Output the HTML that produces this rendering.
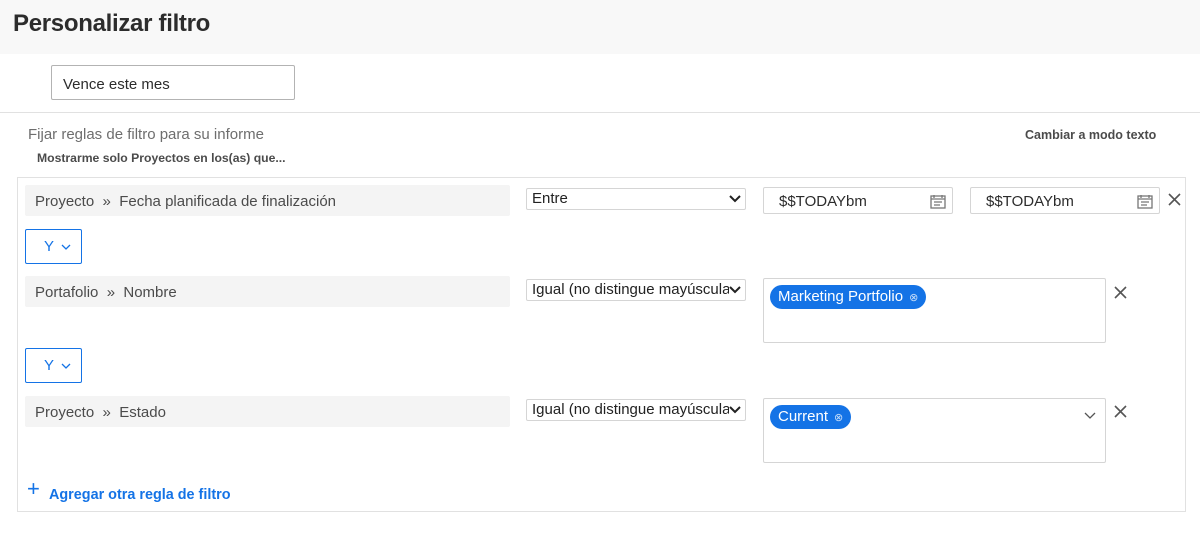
<!DOCTYPE html>
<html><head><meta charset="utf-8"><style>
*{box-sizing:border-box;margin:0;padding:0}
body{width:1200px;height:535px;background:#fff;font-family:"Liberation Sans",sans-serif;color:#2c2c2c;position:relative;overflow:hidden}
.abs{position:absolute}
.hdr{left:0;top:0;width:1200px;height:54px;background:#f8f8f8}
.hdr h1{position:absolute;left:13px;top:10px;font-size:24px;font-weight:bold;color:#2c2c2c;letter-spacing:-0.3px}
.name{left:51px;top:65px;width:244px;height:35px;border:1px solid #b3b3b3;border-radius:2px;font-size:15px;padding:10px 11px 0}
.sep{left:0;top:112px;width:1200px;height:1px;background:#e1e1e1}
.box{left:17px;top:177px;width:1169px;height:335px;border:1px solid #e1e1e1}
.field{height:31px;width:485px;left:25px;background:#f4f4f4;border-radius:2px;font-size:15px;color:#4b4b4b;padding:8px 10px 0}
.sel{left:526px;width:220px;height:22px;border:1px solid #d5d5d5;border-radius:2px;font-size:15px;padding:1px 5px;color:#222;overflow:hidden;white-space:nowrap}
.sel svg{position:absolute;right:4px;top:6px}
.date{width:190px;height:27px;border:1px solid #d5d5d5;border-radius:2px;font-size:15px;padding:5px 15px;top:187px}
.date svg{position:absolute;right:6px;top:6px}
.y{left:25px;width:57px;height:35px;border:1px solid #1473e6;border-radius:2px;color:#1473e6;font-size:15px;padding:8px 0 0 18px}
.y svg{position:absolute;left:35px;top:14px}
.tags{left:763px;width:343px;height:65px;border:1px solid #d5d5d5;border-radius:2px}
.tag{position:absolute;left:6px;top:6px;height:24px;background:#1473e6;color:#fff;border-radius:12px;font-size:15px;padding:3px 8px}
.tag span{font-size:11px;opacity:.75;margin-left:6px}
</style></head><body>
<div class="abs hdr"><h1>Personalizar filtro</h1></div>
<div class="abs name">Vence este mes</div>
<div class="abs sep"></div>
<div class="abs" style="left:28px;top:126px;font-size:15px;color:#6e6e6e">Fijar reglas de filtro para su informe</div>
<div class="abs" style="left:1025px;top:128px;font-size:12.5px;font-weight:bold;color:#4b4b4b">Cambiar a modo texto</div>
<div class="abs" style="left:37px;top:151px;font-size:12.2px;font-weight:bold;color:#4b4b4b">Mostrarme solo Proyectos en los(as) que...</div>
<div class="abs box"></div>

<div class="abs field" style="top:185px">Proyecto &nbsp;» &nbsp;Fecha planificada de finalización</div>
<div class="abs sel" style="top:188px">Entre<svg width="12" height="8"><path d="M1 1l5 5 5-5" stroke="#222" stroke-width="2" fill="none"/></svg></div>
<div class="abs date" style="left:763px">$$TODAYbm<svg width="16" height="15"><rect x="1" y="2" width="14" height="12" fill="none" stroke="#777" stroke-width="1.3"/><path d="M1 5h14M4 1v3M12 1v3M4 8h8M4 11h6" stroke="#777" stroke-width="1.3"/></svg></div>
<div class="abs date" style="left:970px">$$TODAYbm<svg width="16" height="15"><rect x="1" y="2" width="14" height="12" fill="none" stroke="#777" stroke-width="1.3"/><path d="M1 5h14M4 1v3M12 1v3M4 8h8M4 11h6" stroke="#777" stroke-width="1.3"/></svg></div>
<svg class="abs" style="left:1168px;top:193px" width="13" height="13"><path d="M1 1l11 11M12 1L1 12" stroke="#555" stroke-width="1.6"/></svg>

<div class="abs y" style="top:229px">Y<svg width="10" height="6"><path d="M1 1l4 4 4-4" stroke="#1473e6" stroke-width="1.3" fill="none"/></svg></div>

<div class="abs field" style="top:276px">Portafolio &nbsp;» &nbsp;Nombre</div>
<div class="abs sel" style="top:279px">Igual (no distingue mayúscula<svg width="12" height="8" style="background:#fff"><path d="M1 1l5 5 5-5" stroke="#222" stroke-width="2" fill="none"/></svg></div>
<div class="abs tags" style="top:278px"><div class="tag">Marketing Portfolio<span>⊗</span></div></div>
<svg class="abs" style="left:1114px;top:286px" width="13" height="13"><path d="M1 1l11 11M12 1L1 12" stroke="#555" stroke-width="1.6"/></svg>

<div class="abs y" style="top:348px">Y<svg width="10" height="6"><path d="M1 1l4 4 4-4" stroke="#1473e6" stroke-width="1.3" fill="none"/></svg></div>

<div class="abs field" style="top:396px">Proyecto &nbsp;» &nbsp;Estado</div>
<div class="abs sel" style="top:399px">Igual (no distingue mayúscula<svg width="12" height="8" style="background:#fff"><path d="M1 1l5 5 5-5" stroke="#222" stroke-width="2" fill="none"/></svg></div>
<div class="abs tags" style="top:398px"><div class="tag">Current<span>⊗</span></div><svg style="position:absolute;right:9px;top:13px" width="12" height="8"><path d="M1 1l5 5 5-5" stroke="#555" stroke-width="1.3" fill="none"/></svg></div>
<svg class="abs" style="left:1114px;top:405px" width="13" height="13"><path d="M1 1l11 11M12 1L1 12" stroke="#555" stroke-width="1.6"/></svg>

<div class="abs" style="left:27px;top:478px;font-size:22px;color:#1473e6;line-height:22px">+</div>
<div class="abs" style="left:49px;top:487px;font-size:14.4px;font-weight:bold;color:#1473e6">Agregar otra regla de filtro</div>
</body></html>
